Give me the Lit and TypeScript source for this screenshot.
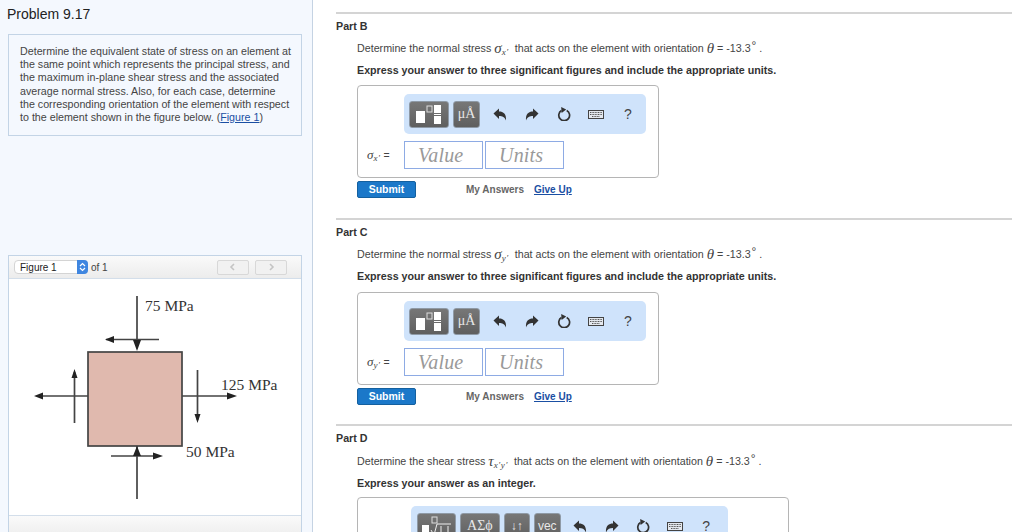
import { LitElement, html, css, svg } from "lit";
import { customElement } from "lit/decorators.js";

const undo = svg`<path d="M0.500 5.500 L6 0.500 L6 3.500 C10.500 3.500 13.500 6 13 12.500 C11.500 9 9.500 8 6 8 L6 11 Z" fill="#333"/>`;
const redo = svg`<path d="M13.500 5.500 L8 0.500 L8 3.500 C3.500 3.500 0.500 6 1 12.500 C2.500 9 4.500 8 8 8 L8 11 Z" fill="#333"/>`;
const reset = svg`<path d="M4.500 3.600 A5.400 5.400 0 1 0 9.700 3.500" fill="none" stroke="#333" stroke-width="1.700"/><path d="M4.200 0 L9.200 2.600 L4.600 6 Z" fill="#333"/>`;
const kbd = svg`<rect x=".5" y=".5" width="15" height="8" fill="#e4e8ee" stroke="#444"/><path d="M2 2.500h12M2 4.500h12M4 6.500h8" stroke="#555" stroke-width="1" stroke-dasharray="1 .6"/>`;
const chevL = svg`<path d="M6 2 L3 5 L6 8" fill="none" stroke="#c4c4c4" stroke-width="1.600"/>`;
const chevR = svg`<path d="M4 2 L7 5 L4 8" fill="none" stroke="#c4c4c4" stroke-width="1.600"/>`;

@customElement("app-root")
export class AppRoot extends LitElement {
  static styles = css`
    :host { display: flex; width: 1024px; height: 532px; overflow: hidden; font-family: "Liberation Sans", Arial, sans-serif; background: #fff; color: #333; }
    .left { width: 313px; height: 532px; box-sizing: border-box; flex: none; background: #f4f8fe; border-right: 1px solid #c5d3e3; padding: 6px 10px 0 8px; overflow: hidden; }
    .title { font-size: 14px; line-height: 16px; color: #222; margin-left: -1px; height: 28px; }
    .intro { height: 102px; box-sizing: border-box; border: 1px solid #c3d4e6; padding: 10px 11px; font-size: 10.7px; line-height: 13.2px; color: #444; white-space: nowrap; }
    a { color: #1a4fa3; text-decoration: underline; }
    .fig { margin-top: 119px; border: 1px solid #c3d4e6; border-bottom: 0; background: #fff; height: 280px; width: 294px; box-sizing: border-box; }
    .figbar { height: 23px; box-sizing: border-box; display: flex; align-items: center; padding: 0 14px 0 5px; background: linear-gradient(#fafafa, #ececec); border-bottom: 1px solid #d3deea; font-size: 10px; color: #444; }
    .select { width: 74px; height: 14px; box-sizing: border-box; display: flex; justify-content: space-between; align-items: center; background: #fff; border: 1px solid #d4d4d4; border-radius: 4px; padding-left: 5px; color: #222; }
    .stepper { width: 11px; height: 14px; margin-right: -1px; background: #3f86e0; border-radius: 0 4px 4px 0; display: flex; }
    .of { margin-left: 3px; flex: 1; }
    .navbtn { width: 32px; height: 15px; box-sizing: border-box; border: 1px solid #d8d8d8; border-radius: 2px; background: #f1f1f1; margin-left: 6px; display: flex; align-items: center; justify-content: center; }
    .figimg { display: block; height: 236px; }
    .figfoot { height: 18px; border-top: 1px solid #d3deea; background: linear-gradient(#fafafa, #efefef); }
    .right { flex: 1; padding: 12px 12px 0 23px; }
    .part { height: 206px; box-sizing: border-box; border-top: 2px solid #d4d4d4; }
    .part h3 { margin: 6px 0 0 0; font-size: 10.7px; line-height: 13px; font-weight: bold; color: #333; }
    .body { margin-left: 21px; }
    .q { margin-top: 8px; font-size: 10.7px; line-height: 14px; height: 14px; color: #444; display: flex; align-items: center; white-space: pre; }
    .q.d { margin-top: 9px; }
    .math { font-family: "Liberation Serif", serif; font-style: italic; font-size: 15px; color: #444; }
    .math.small { font-size: 13px; }
    .math sub { font-size: 9px; vertical-align: -2px; line-height: 0; letter-spacing: .6px; }
    .deg { font-size: 12px; align-self: flex-start; line-height: 10px; margin-left: 1px; }
    .ins { margin-top: 8px; font-size: 10.7px; line-height: 14px; font-weight: bold; color: #333; }
    .answer { margin-top: 8px; width: 302px; height: 93px; box-sizing: border-box; border: 1px solid #b5b5b5; border-radius: 4px; background: #fff; padding: 8px 12px 0 46px; }
    .answer.c { margin-top: 9px; }
    .answer.d { width: 432px; margin-top: 7px; padding-left: 53px; padding-right: 60px; height: 60px; }
    .tools { height: 40px; display: flex; align-items: center; background: #cfe3fb; border-radius: 5px; padding: 0 0 0 5px; box-sizing: border-box; }
    .answer.d .tools { padding: 0 6px; }
    .tb { height: 27px; border-radius: 3px; background: linear-gradient(#777, #5f5f5f); border: 1px solid #8f9aa6; box-sizing: border-box; margin-right: 4px; color: #e8e8e8; display: flex; align-items: center; justify-content: center; font-family: "Liberation Serif", serif; font-size: 14px; }
    .tb.a { width: 40px; }
    .tb.b { width: 27px; }
    .tb.sans { font-family: "Liberation Sans", sans-serif; font-size: 12px; }
    .tb.greek { font-size: 14px; }
    .ic { width: 32px; flex: none; display: flex; justify-content: center; align-items: center; color: #444; font-size: 14px; }
    .answer.d .ic { width: 31.5px; }
    .row { margin-top: 7px; display: flex; align-items: center; margin-left: -38px; }
    .lbl { width: 38px; font-size: 10.5px; color: #444; white-space: pre; display: flex; align-items: center; padding-left: 1px; box-sizing: border-box; }
    .inp { width: 79px; height: 28px; box-sizing: border-box; border: 1px solid #8eabe4; margin-right: 2px; font-family: "Liberation Serif", serif; font-style: italic; font-size: 20px; line-height: 26px; color: #999; padding-left: 13px; letter-spacing: .2px; }
    .acts { margin-top: 3px; display: flex; align-items: center; font-size: 10px; font-weight: bold; height: 17px; }
    .submit { width: 59px; height: 17px; box-sizing: border-box; background: #1b78c9; border: 1px solid #14609f; border-radius: 2px; color: #fff; text-align: center; font-size: 10.5px; line-height: 15px; margin-right: 50px; }
    .mine { color: #666; margin-right: 10px; }
  `;

  private q(sym: string, sub: string, kind: string, cls = "") {
    return html`<div class="q ${cls}">Determine the ${kind} stress <span class="math">${sym}<sub>${sub}</sub></span>  that acts on the element with orientation <span class="math">θ</span> = -13.3<span class="deg">°</span> .</div>`;
  }

  private icons() {
    return html`
      <span class="ic"><svg width="14" height="13" viewBox="0 0 14 13">${undo}</svg></span>
      <span class="ic"><svg width="14" height="13" viewBox="0 0 14 13">${redo}</svg></span>
      <span class="ic"><svg width="14" height="14" viewBox="0 0 14 14">${reset}</svg></span>
      <span class="ic"><svg width="16" height="9" viewBox="0 0 16 9">${kbd}</svg></span>
      <span class="ic">?</span>`;
  }

  private answer(sym: string, sub: string, cls = "") {
    return html`<div class="answer ${cls}">
      <div class="tools">
        <div class="tb a"><svg width="30" height="21" viewBox="0 0 30 21"><rect x="2" y="7" width="9" height="12" fill="#fff"/><rect x="13" y="2" width="5" height="6" fill="none" stroke="#ddd"/><rect x="20" y="1" width="7" height="8" fill="#fff"/><rect x="20" y="10" width="7" height="1" fill="#fff"/><rect x="20" y="12" width="7" height="8" fill="#fff"/></svg></div>
        <div class="tb b">μÅ</div>
        ${this.icons()}
      </div>
      <div class="row">
        <div class="lbl"><span class="math small">${sym}<sub>${sub}</sub></span> =</div>
        <div class="inp">Value</div><div class="inp">Units</div>
      </div>
    </div>
    <div class="acts"><div class="submit">Submit</div><span class="mine">My Answers</span><a href="#">Give Up</a></div>`;
  }

  render() {
    return html`
      <div class="left">
        <div class="title">Problem 9.17</div>
        <div class="intro">Determine the equivalent state of stress on an element at<br>the same point which represents the principal stress, and<br>the maximum in-plane shear stress and the associated<br>average normal stress. Also, for each case, determine<br>the corresponding orientation of the element with respect<br>to the element shown in the figure below. (<a href="#">Figure 1</a>)</div>
        <div class="fig">
          <div class="figbar">
            <div class="select">Figure 1<span class="stepper"><svg width="11" height="14" viewBox="0 0 11 14"><path d="M3 6 L5.500 3.500 L8 6 M3 8 L5.500 10.500 L8 8" fill="none" stroke="#fff" stroke-width="1.200"/></svg></span></div>
            <span class="of">of 1</span>
            <div class="navbtn"><svg width="10" height="10" viewBox="0 0 10 10">${chevL}</svg></div><div class="navbtn"><svg width="10" height="10" viewBox="0 0 10 10">${chevR}</svg></div>
          </div>
          <svg class="figimg" width="292" height="236" viewBox="9 279 292 236">
            <g stroke="#444" stroke-width="1.700" fill="none">
              <rect x="88" y="352" width="94" height="94" fill="#e0b9ae"/>
              <path d="M137 296 V348 M106 339.500 H159 M182 396 H232 M40 396 H88 M74.500 372 V423 M197.500 370 V420 M137 446 V499 M111 456 H158"/>
            </g>
            <g fill="#222">
              <path d="M137 351 L133 340 H141 Z M105 339.500 L114 336 V343 Z M237 396 L227 392.500 V399.500 Z M34 396 L43 392.500 V399.500 Z M74.500 369 L71.500 378 H77.500 Z M197.500 423 L194.500 414 H200.500 Z M137 446 L133 456 H141 Z M163 456 L153 452.500 V459.500 Z"/>
            </g>
            <g font-family="Liberation Serif, serif" font-size="15.500" fill="#333">
              <text x="145" y="311">75 MPa</text>
              <text x="221" y="390">125 MPa</text>
              <text x="186" y="457">50 MPa</text>
            </g>
          </svg>
          <div class="figfoot"></div>
        </div>
      </div>
      <div class="right">
        <div class="part"><h3>Part B</h3><div class="body">
          ${this.q("σ", "x′", "normal")}
          <div class="ins">Express your answer to three significant figures and include the appropriate units.</div>
          ${this.answer("σ", "x′")}
        </div></div>
        <div class="part"><h3>Part C</h3><div class="body">
          ${this.q("σ", "y′", "normal")}
          <div class="ins">Express your answer to three significant figures and include the appropriate units.</div>
          ${this.answer("σ", "y′", "c")}
        </div></div>
        <div class="part"><h3>Part D</h3><div class="body">
          ${this.q("τ", "x′y′", "shear", "d")}
          <div class="ins">Express your answer as an integer.</div>
          <div class="answer d">
            <div class="tools">
              <div class="tb a"><svg width="34" height="21" viewBox="0 0 34 21"><rect x="2" y="9" width="7" height="10" fill="#fff"/><rect x="12" y="1" width="5" height="6" fill="none" stroke="#ddd"/><path d="M11 14 L14 19 L17 8 H31 M21 10 V20 M28 10 V20" fill="none" stroke="#eee"/></svg></div>
              <div class="tb a greek">ΑΣϕ</div>
              <div class="tb b sans">↓↑</div>
              <div class="tb b sans">vec</div>
              ${this.icons()}
            </div>
          </div>
        </div></div>
      </div>`;
  }
}
